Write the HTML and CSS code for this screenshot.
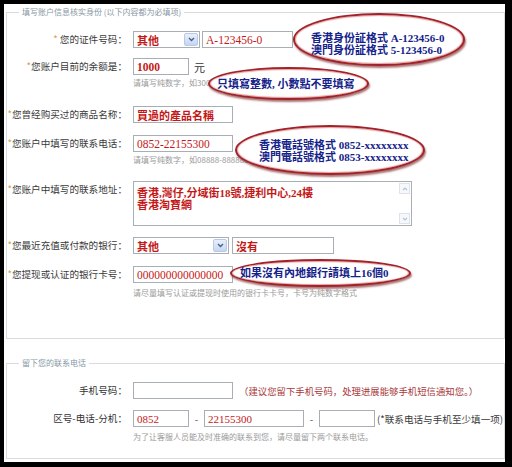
FILE: index.html
```html
<!DOCTYPE html>
<html lang="zh">
<head>
<meta charset="utf-8">
<title>填写账户信息核实身份</title>
<link rel="stylesheet" href="styles.css">
</head>
<body>
<div class="frame">
  <fieldset class="fs fs1">
    <legend>填写账户信息核实身份 (以下内容都为必填项)</legend>

    <div class="row r1">
      <div class="lbl"><i>*</i> 您的证件号码：</div>
      <div class="fld">
        <div class="line">
          <div class="box sel w67"><span>其他</span><span class="arrow"><svg width="7" height="5" viewBox="0 0 7 5"><path d="M1 1l2.5 2.5L6 1" fill="none" stroke="#4a5f86" stroke-width="1.4"/></svg></span></div>
          <div class="box w91 ml2"><span class="lat">A-123456-0</span></div>
        </div>
      </div>
    </div>

    <div class="row r2">
      <div class="lbl"><i>*</i>您账户目前的余额是：</div>
      <div class="fld">
        <div class="line">
          <div class="box w56"><span class="lat bold">1000</span></div>
          <span class="unit">元</span>
        </div>
        <div class="hint">请填写纯数字，如3000</div>
      </div>
    </div>

    <div class="row r3">
      <div class="lbl"><i>*</i>您曾经购买过的商品名称：</div>
      <div class="fld">
        <div class="line">
          <div class="box w100"><span>買過的產品名稱</span></div>
        </div>
      </div>
    </div>

    <div class="row r4">
      <div class="lbl"><i>*</i>您账户中填写的联系电话：</div>
      <div class="fld">
        <div class="line">
          <div class="box w100"><span class="lat">0852-22155300</span></div>
        </div>
        <div class="hint">请填写纯数字，如08888-88888888</div>
      </div>
    </div>

    <div class="row r5">
      <div class="lbl"><i>*</i>您账户中填写的联系地址：</div>
      <div class="fld">
        <div class="ta">
          <div class="ta-text">香港,灣仔,分域街18號,捷利中心,24樓<br>香港淘寶網</div>
          <div class="sb">
            <span class="sb-btn"><svg width="6" height="4" viewBox="0 0 6 4"><path d="M1 3l2-2 2 2" fill="none" stroke="#b5c2d6" stroke-width="1.2"/></svg></span>
            <span class="sb-btn"><svg width="6" height="4" viewBox="0 0 6 4"><path d="M1 1l2 2 2-2" fill="none" stroke="#b5c2d6" stroke-width="1.2"/></svg></span>
          </div>
        </div>
      </div>
    </div>

    <div class="row r6">
      <div class="lbl"><i>*</i>您最近充值或付款的银行：</div>
      <div class="fld">
        <div class="line">
          <div class="box sel w96"><span>其他</span><span class="arrow"><svg width="7" height="5" viewBox="0 0 7 5"><path d="M1 1l2.5 2.5L6 1" fill="none" stroke="#4a5f86" stroke-width="1.4"/></svg></span></div>
          <div class="box w102 ml3"><span>沒有</span></div>
        </div>
      </div>
    </div>

    <div class="row r7">
      <div class="lbl"><i>*</i>您提现或认证的银行卡号：</div>
      <div class="fld">
        <div class="line">
          <div class="box w100"><span class="lat">000000000000000</span></div>
        </div>
        <div class="hint h3">请尽量填写认证或提现时使用的银行卡卡号，卡号为纯数字格式</div>
      </div>
    </div>
  </fieldset>

  <fieldset class="fs fs2">
    <legend>留下您的联系电话</legend>

    <div class="row f1">
      <div class="lbl dark">手机号码：</div>
      <div class="fld">
        <div class="line">
          <div class="box w100"></div>
          <span class="suggest">（建议您留下手机号码，处理进展能够手机短信通知您。）</span>
        </div>
      </div>
    </div>

    <div class="row f2">
      <div class="lbl dark">区号-电话-分机：</div>
      <div class="fld">
        <div class="line">
          <div class="box w56 thin"><span class="lat">0852</span></div>
          <span class="dash">-</span>
          <div class="box w100 thin"><span class="lat">22155300</span></div>
          <span class="dash">-</span>
          <div class="box w56"></div>
          <span class="either">(*联系电话与手机至少填一项)</span>
        </div>
        <div class="hint h3">为了让客服人员能及时准确的联系到您，请尽量留下两个联系电话。</div>
      </div>
    </div>
  </fieldset>

  <div class="note n1"><span>香港身份証格式 <b class="lat">A-123456-0</b></span><span>澳門身份証格式 <b class="lat">5-123456-0</b></span></div>
  <div class="note n2"><span>只填寫整數, 小數點不要填寫</span></div>
  <div class="note n3"><span>香港電話號格式 <b class="lat">0852-xxxxxxxx</b></span><span>澳門電話號格式 <b class="lat">0853-xxxxxxxx</b></span></div>
  <div class="note n4"><span>如果沒有內地銀行請填上16個0</span></div>
</div>
</body>
</html>
```

FILE: styles.css
```css
* { box-sizing: border-box; }

body {
  margin: 0;
  background: #000;
  font-family: "Noto Sans CJK SC", "Noto Sans CJK TC", sans-serif;
}

.frame {
  position: relative;
  width: 501px;
  height: 458px;
  margin: 4px 0 0 4px;
  padding-top: 2px;
  background: #fff;
  overflow: hidden;
}

.fs {
  margin: 0 0 0 2px;
  padding: 0;
  border: 1px solid #d6dcdf;
  min-width: 0;
}
.fs1 { height: 333px; }
.fs2 { height: 102px; margin-top: 18px; }

legend {
  margin-left: 12px;
  padding: 0 3px;
  font-size: 8px;
  line-height: 12px;
  color: #8797a5;
  white-space: nowrap;
}

.row {
  display: grid;
  grid-template-columns: 120px auto;
  column-gap: 6px;
  align-items: start;
}
.r1 { margin-top: 13px; }
.r2 { margin-top: 10px; }
.r3 { margin-top: 17px; }
.r4 { margin-top: 12px; }
.r5 { margin-top: 15px; }
.r6 { margin-top: 11px; }
.r7 { margin-top: 12px; }
.f1 { margin-top: 13px; }
.f2 { margin-top: 11px; }

.lbl {
  text-align: right;
  font-size: 9.6px;
  line-height: 17px;
  color: #3a3a3a;
  white-space: nowrap;
}
.lbl i { font-style: normal; color: #d1a24e; }
.lbl.dark { color: #333; }

.fld { display: flex; flex-direction: column; }
.line { display: flex; align-items: center; height: 17px; }

.hint {
  font-size: 8px;
  line-height: 12px;
  color: #9a9a9a;
  margin-top: 2px;
  white-space: nowrap;
}
.hint.h3 { margin-top: 4px; }

.box {
  height: 17px;
  border: 1px solid #a7aeb4;
  background: #fff;
  display: flex;
  align-items: center;
  padding-left: 3px;
  color: #c41818;
  font-weight: 700;
  font-size: 11px;
  font-family: "Liberation Serif", "Noto Sans CJK TC", serif;
  white-space: nowrap;
  overflow: hidden;
}
.box .lat { font-weight: 400; font-size: 11.5px; }
.box .lat.bold { font-weight: 700; }
.box.thin .lat { font-size: 11px; }

.w56 { width: 56px; }
.w67 { width: 67px; }
.w91 { width: 91px; }
.w96 { width: 96px; }
.w100 { width: 100px; }
.w102 { width: 102px; }
.ml2 { margin-left: 2px; }
.ml3 { margin-left: 3px; }

.sel .arrow {
  margin-left: auto;
  margin-right: 1px;
  width: 14px;
  height: 13px;
  border: 1px solid #b8c8e6;
  border-radius: 2px;
  background: linear-gradient(#e9f0fc, #c5d5f2);
  display: flex;
  align-items: center;
  justify-content: center;
}

.unit {
  margin-left: 5px;
  font-size: 11px;
  color: #333;
  line-height: 17px;
  padding-top: 2px;
}

.ta {
  width: 279px;
  height: 45px;
  border: 1px solid #a7aeb4;
  display: flex;
}
.ta-text {
  flex: 1;
  padding: 5px 3px 0;
  font-size: 11px;
  line-height: 12px;
  color: #c41818;
  font-weight: 700;
  font-family: "Liberation Serif", "Noto Sans CJK TC", serif;
  white-space: nowrap;
}
.sb {
  width: 12px;
  padding: 1px 1px 1px 0;
  display: flex;
  flex-direction: column;
  justify-content: space-between;
}
.sb-btn {
  height: 11px;
  border: 1px solid #dde3ec;
  background: #f6f8fb;
  display: flex;
  align-items: center;
  justify-content: center;
}

.suggest {
  margin-left: 6px;
  font-size: 9.4px;
  color: #a8383a;
  white-space: nowrap;
}
.dash {
  width: 15px;
  text-align: center;
  font-size: 10px;
  color: #555;
}
.either {
  margin-left: 2px;
  font-size: 9.6px;
  color: #3a3a3a;
  white-space: nowrap;
}

.note {
  position: absolute;
  border: 2px solid #a3222a;
  border-radius: 50%;
  background: #fff;
  box-shadow: 1px 2px 2px rgba(100, 0, 0, 0.55), inset 0 0 1px 1px rgba(205, 90, 90, 0.55);
  color: #15228a;
  font-weight: 700;
  font-size: 11px;
  line-height: 12px;
  font-family: "Liberation Serif", "Noto Sans CJK TC", serif;
  white-space: nowrap;
  display: flex;
  flex-direction: column;
  justify-content: center;
}
.n1 { left: 289px; top: 9px; width: 172px; height: 53px; padding: 9px 0 0 16px; }
.n2 { left: 204px; top: 63px; width: 161px; height: 33px; padding-left: 7px; }
.n3 { left: 231px; top: 121px; width: 190px; height: 50px; padding: 1px 0 0 22px; }
.n4 { left: 226px; top: 255px; width: 181px; height: 28px; padding-left: 8px; }
```
